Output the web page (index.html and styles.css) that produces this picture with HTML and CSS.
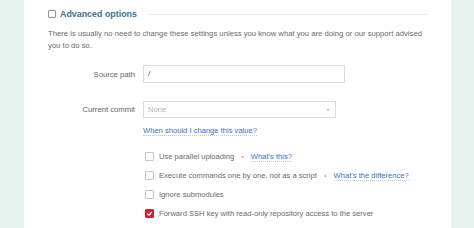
FILE: index.html
```html
<!DOCTYPE html>
<html>
<head>
<meta charset="utf-8">
<link rel="stylesheet" href="styles.css">
</head>
<body>
<div class="page">
  <div class="side"></div>
  <main class="main">
    <div class="section-head">
      <span class="box"></span>
      <span class="title">Advanced options</span>
      <span class="rule"></span>
    </div>
    <p class="note">There is usually no need to change these settings unless you know what you are doing or our support advised you to do so.</p>
    <div class="row row-source">
      <label class="lbl">Source path</label>
      <div class="input">/</div>
    </div>
    <div class="row row-commit">
      <label class="lbl">Current commit</label>
      <div class="select"><span class="ph">None</span><span class="caret"></span></div>
    </div>
    <div class="row row-help">
      <span class="lbl"></span>
      <a class="link">When should I change this value?</a>
    </div>
    <div class="checks">
      <div class="check"><span class="cb"></span><span>Use parallel uploading</span><span class="dot">•</span><a class="link">What's this?</a></div>
      <div class="check"><span class="cb"></span><span>Execute commands one by one, not as a script</span><span class="dot">•</span><a class="link">What's the difference?</a></div>
      <div class="check"><span class="cb"></span><span>Ignore submodules</span></div>
      <div class="check"><span class="cb on"><svg viewBox="0 0 10 10" width="7" height="7"><path d="M2 5.2 L4.2 7.3 L8.2 2.8" fill="none" stroke="#fff" stroke-width="1.8"/></svg></span><span>Forward SSH key with read-only repository access to the server</span></div>
    </div>
  </main>
  <div class="side"></div>
</div>
</body>
</html>
```
FILE: styles.css
```css
html, body { margin: 0; padding: 0; }
body { font-family: "Liberation Sans", Arial, sans-serif; color: #666; background: #fff; }
.page { display: flex; width: 474px; height: 228px; overflow: hidden; }
.side { width: 24px; background: #e6f2ee; flex: none; }
.side:last-child { width: 23px; }
.main { flex: 1; padding: 0 23px 0 24px; background: #fff; }
.section-head { display: flex; align-items: center; height: 14px; margin-top: 7px; }
.box { width: 6px; height: 6px; border: 1px solid #8a96a0; border-radius: 1px; flex: none; }
.title { font-weight: bold; font-size: 8.9px; color: #3f6f8d; margin-left: 4px; }
.rule { flex: 1; height: 1px; background: #eceeee; margin-left: 11px; }
.note { font-size: 7.7px; line-height: 12px; margin: 7px 0 0; color: #6a6a6a; }
.row { display: flex; align-items: center; }
.lbl { width: 87px; text-align: right; font-size: 7.7px; margin-right: 8px; color: #666; flex: none; }
.row-source { margin-top: 13px; }
.input { font-size: 8px; line-height: 16px; padding-left: 4px; box-sizing: border-box; width: 202px; height: 18px; border: 1px solid #dcdcdc; color: #555; }
.row-commit { margin-top: 18px; }
.select { width: 193px; height: 17px; border: 1px solid #dcdcdc; box-sizing: border-box; display: flex; align-items: center; justify-content: space-between; padding: 0 5px 0 4px; font-size: 7.7px; }
.ph { color: #b5b5b5; }
.caret { width: 0; height: 0; border-left: 2px solid transparent; border-right: 2px solid transparent; border-top: 2px solid #bbb; }
.row-help { margin-top: 8px; }
.link { color: #3a6fc0; font-size: 7.6px; text-decoration: none; border-bottom: 1px dotted #b8c8e6; }
.checks { margin-top: 11px; padding-left: 97px; }
.check { display: flex; align-items: center; height: 19px; font-size: 7.6px; color: #6a6a6a; }
.cb { width: 7px; height: 7px; border: 1px solid #c4c4c4; border-radius: 1px; margin-right: 5px; flex: none; display: flex; align-items: center; justify-content: center; }
.cb.on { background: #d0212f; border-color: #d0212f; }
.dot { margin: 0 7px; color: #aaa; }
```
